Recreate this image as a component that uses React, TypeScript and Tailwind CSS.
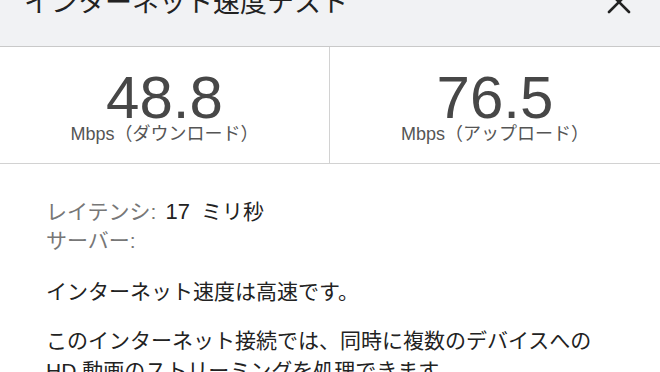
import React from "react"

const font = { fontFamily: '"Liberation Sans", "Noto Sans CJK JP", sans-serif' }

function Stat({ value, label, divider }: { value: string; label: string; divider?: boolean }) {
  return (
    <div className={"flex flex-col items-center pt-[26px] pb-[18px] " + (divider ? "border-r border-[#d2d2d2]" : "")}>
      <div className="text-[60px] leading-[50px] text-[#474747]">{value}</div>
      <div className="text-[18px] leading-[22px] text-[#555555]">{label}</div>
    </div>
  )
}

export default function App() {
  return (
    <div className="w-[660px] h-[372px] overflow-hidden bg-white" style={font}>
      <div className="h-[47px] bg-[#f1f2f4] border-b border-[#c9c9c9] flex justify-between items-start pl-[24px] pr-[29px] overflow-hidden">
        <div className="-mt-[10px] text-[27px] leading-[26px] text-[#222222] whitespace-nowrap">インターネット速度テスト</div>
        <svg className="-mt-[10px]" width="24" height="24" viewBox="0 0 24 24" fill="none" stroke="#222222" strokeWidth="2.6" strokeLinecap="round">
          <path d="M2 2L22 22M22 2L2 22" />
        </svg>
      </div>

      <div className="grid grid-cols-[330px_1fr] border-b border-[#d2d2d2]">
        <Stat value="48.8" label="Mbps（ダウンロード）" divider />
        <Stat value="76.5" label="Mbps（アップロード）" />
      </div>

      <div className="px-[46px] pt-[33px] text-[21px] leading-[30px] text-[#222222]">
        <div className="leading-[29px]">
          <span className="text-[#777777]">レイテンシ:</span>
          <span className="ml-[9px] text-[22px]">17</span>
          <span className="ml-[11px]">ミリ秒</span>
        </div>
        <div className="leading-[29px] text-[#777777]">サーバー:</div>
        <p className="mt-[22px]">インターネット速度は高速です。</p>
        <p className="mt-[19px]">
          このインターネット接続では、同時に複数のデバイスへの
          <br />
          HD 動画のストリーミングを処理できます。
        </p>
      </div>
    </div>
  )
}
